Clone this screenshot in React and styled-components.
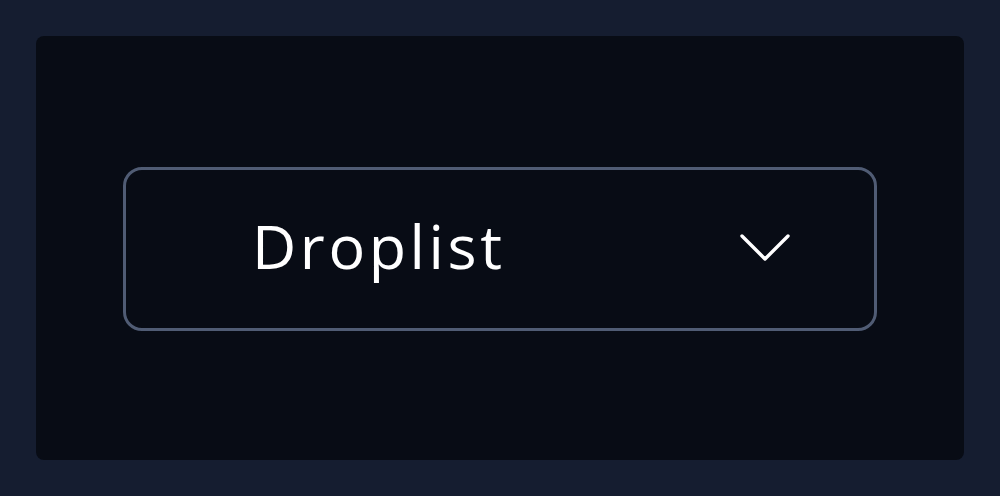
import React from "react";
import styled, { createGlobalStyle } from "styled-components";

const GlobalStyle = createGlobalStyle`
  html, body {
    margin: 0;
    padding: 0;
    background: #151d30;
  }
  * { box-sizing: border-box; }
`;

const Page = styled.div`
  width: 1000px;
  height: 496px;
  padding: 36px;
  background: #151d30;
`;

const Panel = styled.div`
  height: 424px;
  background: #080c15;
  border-radius: 8px;
  display: flex;
  align-items: center;
  justify-content: center;
  padding-top: 2px;
`;

const Select = styled.button`
  width: 754px;
  height: 164px;
  border: 3px solid #505c74;
  border-radius: 19px;
  background: transparent;
  display: flex;
  align-items: center;
  padding: 0 83px 0 126px;
  cursor: pointer;
`;

const Label = styled.span`
  font-family: "Open Sans", "Liberation Sans", sans-serif;
  font-size: 61px;
  font-weight: 500;
  letter-spacing: 3.6px;
  color: #ffffff;
  line-height: 1;
  margin-top: -8px;
`;

const Chevron = styled.svg`
  margin-left: auto;
  width: 52px;
  height: 32px;
  margin-top: -2px;
`;

export default function App() {
  return (
    <>
      <GlobalStyle />
      <Page>
        <Panel>
          <Select type="button">
            <Label>Droplist</Label>
            <Chevron viewBox="0 0 52 32" fill="none">
              <polyline
                points="3,4 26,27 49,4"
                stroke="#ffffff"
                strokeWidth="3.4"
                strokeLinecap="round"
                strokeLinejoin="round"
              />
            </Chevron>
          </Select>
        </Panel>
      </Page>
    </>
  );
}
